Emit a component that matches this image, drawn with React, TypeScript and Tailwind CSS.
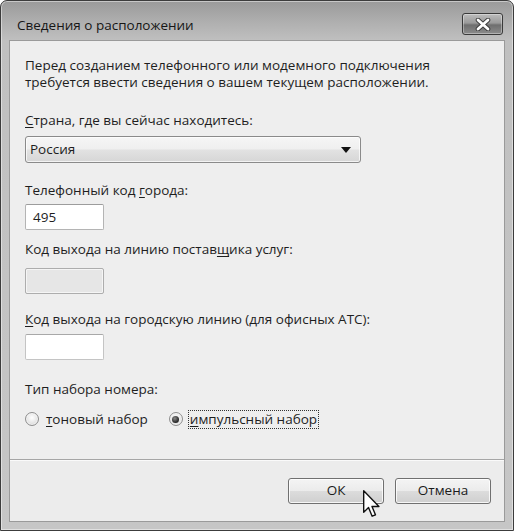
import React from "react";

const font = { fontFamily: '"Open Sans", "Noto Sans", sans-serif' };

function U({ children }: { children: React.ReactNode }) {
  return <span className="underline underline-offset-2 decoration-1">{children}</span>;
}

function Radio({ checked }: { checked?: boolean }) {
  return (
    <span className="w-[14px] h-[14px] rounded-full border border-[#8e8e8e] bg-[radial-gradient(circle_at_50%_40%,#ffffff_0%,#e6e6e6_55%,#c0c0c0_100%)] shadow-[inset_0_0_0_1px_rgba(255,255,255,0.6)] flex items-center justify-center">
      {checked && (
        <span className="w-[7px] h-[7px] rounded-full bg-[radial-gradient(circle_at_40%_35%,#8a8a8a_0%,#222222_70%)]" />
      )}
    </span>
  );
}

function Button({ children }: { children: React.ReactNode }) {
  return (
    <button
      type="button"
      className="w-[96px] h-[26px] rounded-[3px] border border-[#707070] bg-[linear-gradient(to_bottom,#f4f4f4_0%,#ebebeb_50%,#dcdcdc_51%,#cfcfcf_100%)] shadow-[inset_0_0_0_1px_rgba(255,255,255,0.8)] text-[13.5px] text-[#1b1b1b] leading-none"
    >
      {children}
    </button>
  );
}

export default function App() {
  return (
    <div className="w-[517px] h-[532px] bg-white" style={font}>
      <div className="relative w-[514px] h-[531px] rounded-t-[7px] border border-[#3c3c3c] bg-[linear-gradient(to_bottom,#9a9a9a_0px,#b0b0b0_22px,#c0c0c0_40px,#c6c6c6_100%)] shadow-[inset_0_0_0_1px_rgba(255,255,255,0.45)] flex flex-col px-[8px] pb-[8px]">
        {/* title bar */}
        <div className="h-[39px] flex items-start justify-between">
          <div className="pl-[8px] pt-[14px] text-[13.5px] leading-[20px] text-[#161616]">
            Сведения о расположении
          </div>
          <div className="mt-[12px] mr-[2px] w-[41px] h-[22px] rounded-[3px] border border-[#3a3a3a] bg-[linear-gradient(to_bottom,#bdbdbd_0%,#9a9a9a_45%,#6e6e6e_55%,#8c8c8c_100%)] shadow-[inset_0_0_0_1px_rgba(255,255,255,0.35)] flex items-center justify-center">
            <svg width="16" height="13" viewBox="0 0 16 13">
              <path
                d="M3 2 L13 11 M13 2 L3 11"
                stroke="#3a3a3a"
                strokeWidth="4.6"
                strokeLinecap="round"
              />
              <path
                d="M3 2 L13 11 M13 2 L3 11"
                stroke="#ffffff"
                strokeWidth="2.8"
                strokeLinecap="round"
              />
            </svg>
          </div>
        </div>

        {/* client area */}
        <div className="flex-1 bg-[#eeeeee] border border-[#9a9a9a] flex flex-col text-[13.5px] leading-[17px] text-[#1e1e1e]">
          <div className="flex-1 flex flex-col items-start pl-[15px] pt-[16px]">
            <p>
              Перед созданием телефонного или модемного подключения
              <br />
              требуется ввести сведения о вашем текущем расположении.
            </p>

            <div className="mt-[21px]">
              <U>С</U>трана, где вы сейчас находитесь:
            </div>
            <div className="mt-[7px] w-[336px] h-[27px] rounded-[3px] border border-[#8a8a8a] bg-[linear-gradient(to_bottom,#f6f6f6_0%,#efefef_48%,#e2e2e2_52%,#d6d6d6_100%)] shadow-[inset_0_0_0_1px_rgba(255,255,255,0.7)] flex items-center justify-between pl-[4px] pr-[9px]">
              <span>Россия</span>
              <svg width="10" height="6" viewBox="0 0 10 6">
                <path d="M0 0 H10 L5 6 Z" fill="#111111" />
              </svg>
            </div>

            <div className="mt-[19px]">
              Телефонный код <U>г</U>орода:
            </div>
            <div className="mt-[5px] w-[79px] h-[26px] rounded-[2px] border border-[#b4b4b4] border-t-[#9c9c9c] bg-white flex items-center pl-[7px]">
              495
            </div>

            <div className="mt-[11px]">
              Код выхода на линию постав<U>щ</U>ика услуг:
            </div>
            <div className="mt-[10px] w-[79px] h-[26px] rounded-[2px] border border-[#adadad] bg-[#e6e6e6] shadow-[inset_0_0_0_1px_rgba(255,255,255,0.6)]" />

            <div className="mt-[17px]">
              <U>К</U>од выхода на городскую линию (для офисных АТС):
            </div>
            <div className="mt-[6px] w-[79px] h-[26px] rounded-[2px] border border-[#c4c4c4] border-t-[#a8a8a8] bg-white" />

            <div className="mt-[21px]">Тип набора номера:</div>
            <div className="mt-[11px] h-[20px] flex items-center">
              <Radio />
              <span className="ml-[7px]">
                <U>т</U>оновый набор
              </span>
              <span className="ml-[21px]">
                <Radio checked />
              </span>
              <span className="ml-[5px] px-[1px] border border-dotted border-[#333333] leading-[17px]">
                <U>и</U>мпульсный набор
              </span>
            </div>
          </div>

          {/* footer */}
          <div className="h-[62px] border-t border-[#a6a6a6] shadow-[inset_0_1px_0_#fafafa] bg-[#ececec] flex items-start justify-end gap-[11px] pt-[18px] pr-[13px]">
            <Button>ОК</Button>
            <Button>Отмена</Button>
          </div>
        </div>

        {/* mouse pointer */}
        <svg
          className="absolute left-[362px] top-[489px]"
          width="18"
          height="28"
          viewBox="0 0 13 20"
        >
          <path
            d="M0.5 0.5 L0.5 16 L4 12.6 L6.6 18.8 L9 17.8 L6.5 11.8 L11.5 11.8 Z"
            fill="#ffffff"
            stroke="#111111"
            strokeWidth="1"
            strokeLinejoin="round"
          />
        </svg>
      </div>
    </div>
  );
}
